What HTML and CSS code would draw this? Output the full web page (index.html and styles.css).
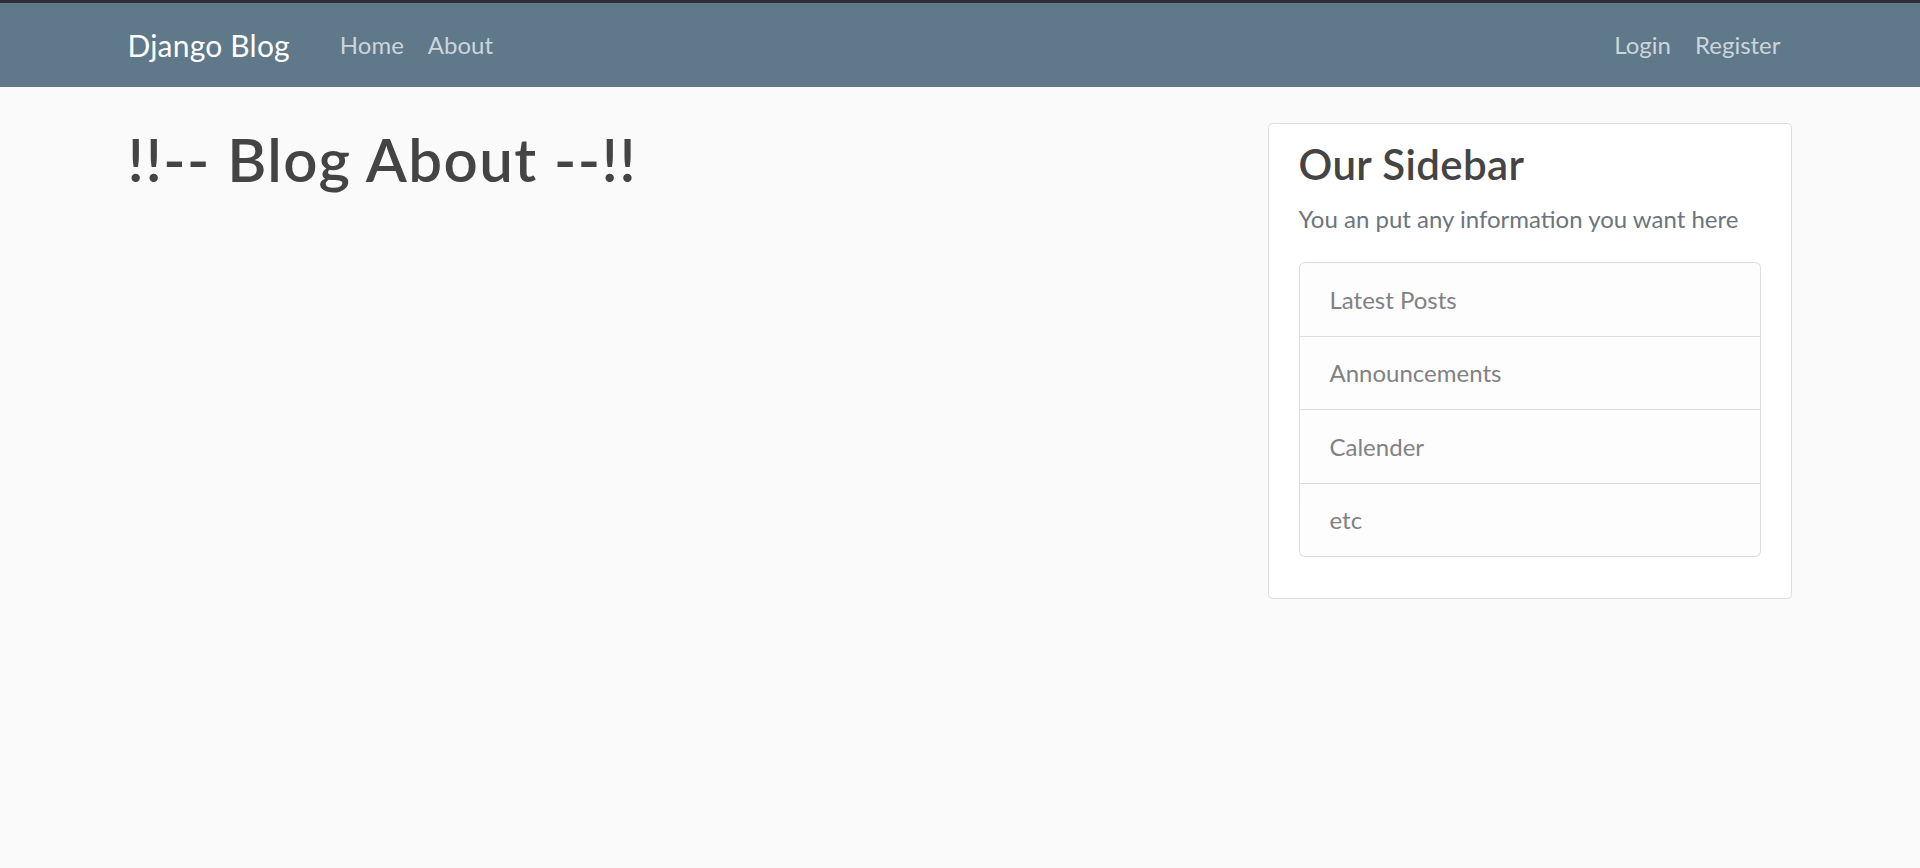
FILE: index.html
```html
<!DOCTYPE html>
<html lang="en">
<head>
    <meta charset="UTF-8">
    <meta name="viewport" content="width=device-width, initial-scale=1.0">
    <title>Django Blog - About</title>
    <link rel="stylesheet" href="styles.css">
</head>
<body>
    <div class="window-edge"></div>
    <header class="site-header">
        <nav class="navbar">
            <div class="container nav-inner">
                <div class="nav-left">
                    <a class="navbar-brand" href="#">Django Blog</a>
                    <a class="nav-link" href="#">Home</a>
                    <a class="nav-link" href="#">About</a>
                </div>
                <div class="nav-right">
                    <a class="nav-link" href="#">Login</a>
                    <a class="nav-link" href="#">Register</a>
                </div>
            </div>
        </nav>
    </header>

    <main class="container page">
        <div class="row">
            <div class="col-main">
                <h1>!!-- Blog About --!!</h1>
            </div>
            <div class="col-side">
                <div class="content-section">
                    <h3>Our Sidebar</h3>
                    <p class="text-muted">You an put any information you want here</p>
                    <ul class="list-group">
                        <li class="list-group-item">Latest Posts</li>
                        <li class="list-group-item">Announcements</li>
                        <li class="list-group-item">Calender</li>
                        <li class="list-group-item">etc</li>
                    </ul>
                </div>
            </div>
        </div>
    </main>
</body>
</html>
```

FILE: styles.css
```css
:root{
    --steel: #5f788a;
    --page-bg: #fafafa;
    --heading: #444444;
    --muted: #6c757d;
    --item-text: #818182;
    --item-bg: #fdfdfe;
    --link: #cbd5db;
}
* {
    box-sizing: border-box;
}
body {
    margin: 0;
    background: var(--page-bg);
    color: #333333;
    font-family: Lato, "Open Sans", Arial, sans-serif;
    font-size: 24px;
    line-height: 1.5;
}
a {
    text-decoration: none;
}

.window-edge {
    height: 3px;
    background: #2e3033;
}

.container {
    max-width: 1710px;
    margin: 0 auto;
    padding: 0 22.5px;
}

/* navbar */
.navbar {
    background-color: var(--steel);
    padding: 12px 0;
}
.nav-inner {
    display: flex;
    justify-content: space-between;
    align-items: center;
}
.nav-left, .nav-right {
    display: flex;
    align-items: center;
}
.navbar-brand {
    color: #ffffff;
    font-size: 30px;
    line-height: 45px;
    padding: 7.5px 0;
    margin-right: 38px;
    letter-spacing: 0.2px;
}
.nav-link {
    color: var(--link);
    font-size: 24px;
    line-height: 36px;
    padding: 12px;
}
.nav-link:hover {
    color: #ffffff;
}

/* page body */
.container.page {
    padding-top: 36px;
}
.row {
    display: flex;
    margin: 0 -22.5px;
}
.col-main {
    flex: 0 0 66.6667%;
    padding: 0 22.5px;
}
.col-side {
    flex: 0 0 33.3333%;
    padding: 0 22.5px;
}

h1, h3 {
    color: var(--heading);
    font-weight: 600;
    line-height: 1.2;
    margin: 0 0 12px;
}
h1 {
    font-size: 60px;
    letter-spacing: 1.4px;
}
h3 {
    font-size: 42px;
    letter-spacing: 0.4px;
}

.content-section {
    background: #ffffff;
    padding: 15px 30px;
    border: 1.5px solid #dddddd;
    border-radius: 4.5px;
    margin-bottom: 30px;
}
.text-muted {
    color: var(--muted);
    margin: 0 0 25px;
}

.list-group {
    list-style: none;
    margin: 0 0 26px;
    padding: 0;
}
.list-group-item {
    color: var(--item-text);
    background: var(--item-bg);
    padding: 18.5px 30px 18px;
    border: 1.5px solid rgba(0, 0, 0, 0.125);
}
.list-group-item + .list-group-item {
    border-top-width: 0;
}
.list-group-item:first-child {
    border-radius: 6px 6px 0 0;
}
.list-group-item:last-child {
    border-radius: 0 0 6px 6px;
}
```
